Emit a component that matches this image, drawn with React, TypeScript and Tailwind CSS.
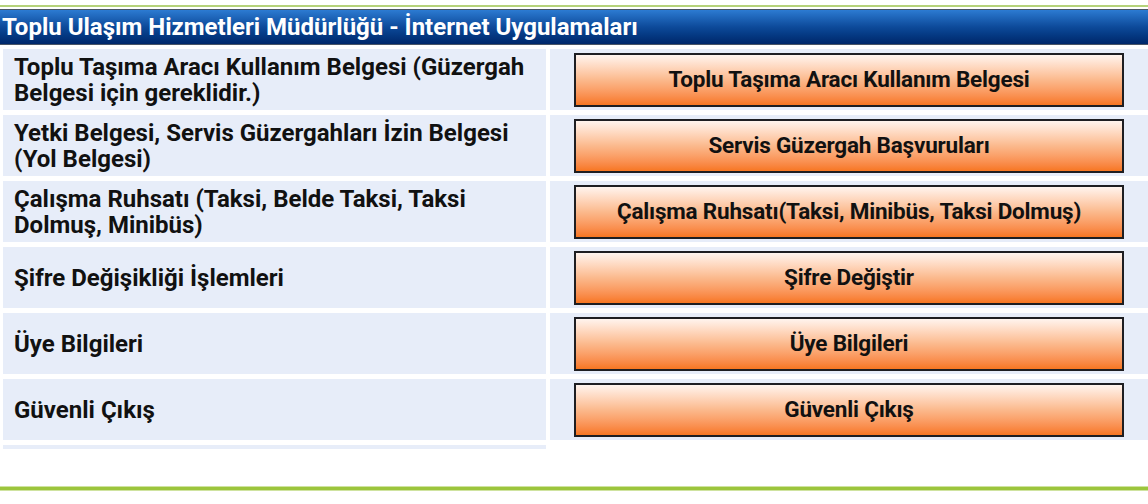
const rows = [
  {
    label: "Toplu Taşıma Aracı Kullanım Belgesi (Güzergah Belgesi için gereklidir.)",
    action: "Toplu Taşıma Aracı Kullanım Belgesi",
  },
  {
    label: "Yetki Belgesi, Servis Güzergahları İzin Belgesi (Yol Belgesi)",
    action: "Servis Güzergah Başvuruları",
  },
  {
    label: "Çalışma Ruhsatı (Taksi, Belde Taksi, Taksi Dolmuş, Minibüs)",
    action: "Çalışma Ruhsatı(Taksi, Minibüs, Taksi Dolmuş)",
  },
  { label: "Şifre Değişikliği İşlemleri", action: "Şifre Değiştir" },
  { label: "Üye Bilgileri", action: "Üye Bilgileri" },
  { label: "Güvenli Çıkış", action: "Güvenli Çıkış" },
]

export default function App() {
  return (
    <div className="min-h-[504px] w-full overflow-hidden bg-white pt-[5px] font-['Roboto',sans-serif] text-[#111]">
      <div className="h-[2px] bg-[#b5d27a]" />
      <div className="mt-[2px] flex h-[36px] items-center border-y border-[#4a5566] bg-gradient-to-b from-[#2c7bd2] via-[#0d4a9a] to-[#00276a] pl-[2px]">
        <h1 className="text-[24px] leading-none font-bold text-white">
          Toplu Ulaşım Hizmetleri Müdürlüğü - İnternet Uygulamaları
        </h1>
      </div>

      <div className="mt-[4px] grid grid-cols-[543px_1fr] gap-x-[4px] gap-y-[5px] pl-[3px]">
        {rows.map((row) => (
          <div key={row.action} className="contents">
            <div className="flex h-[61px] items-center bg-[#e7edf9] pr-2 pl-[11px]">
              <span className="text-[24px] leading-[26px] font-bold">{row.label}</span>
            </div>
            <div className="h-[61px] bg-[#e7edf9] pt-[4px] pl-[24px]">
              <button className="flex h-[54px] w-[550px] items-center justify-center border-2 border-[#1e1e22] bg-gradient-to-b from-[#fff4ee] via-[#fbb98c] to-[#f7761f] text-[22.5px] font-bold tracking-[-0.2px] text-[#111]">
                {row.action}
              </button>
            </div>
          </div>
        ))}
        <div className="h-[4px] bg-[#e7edf9]" />
      </div>

      <div className="mt-[37px] h-[5px] border-y border-[#cfe3a0] bg-[#9cc53c]" />
    </div>
  )
}
